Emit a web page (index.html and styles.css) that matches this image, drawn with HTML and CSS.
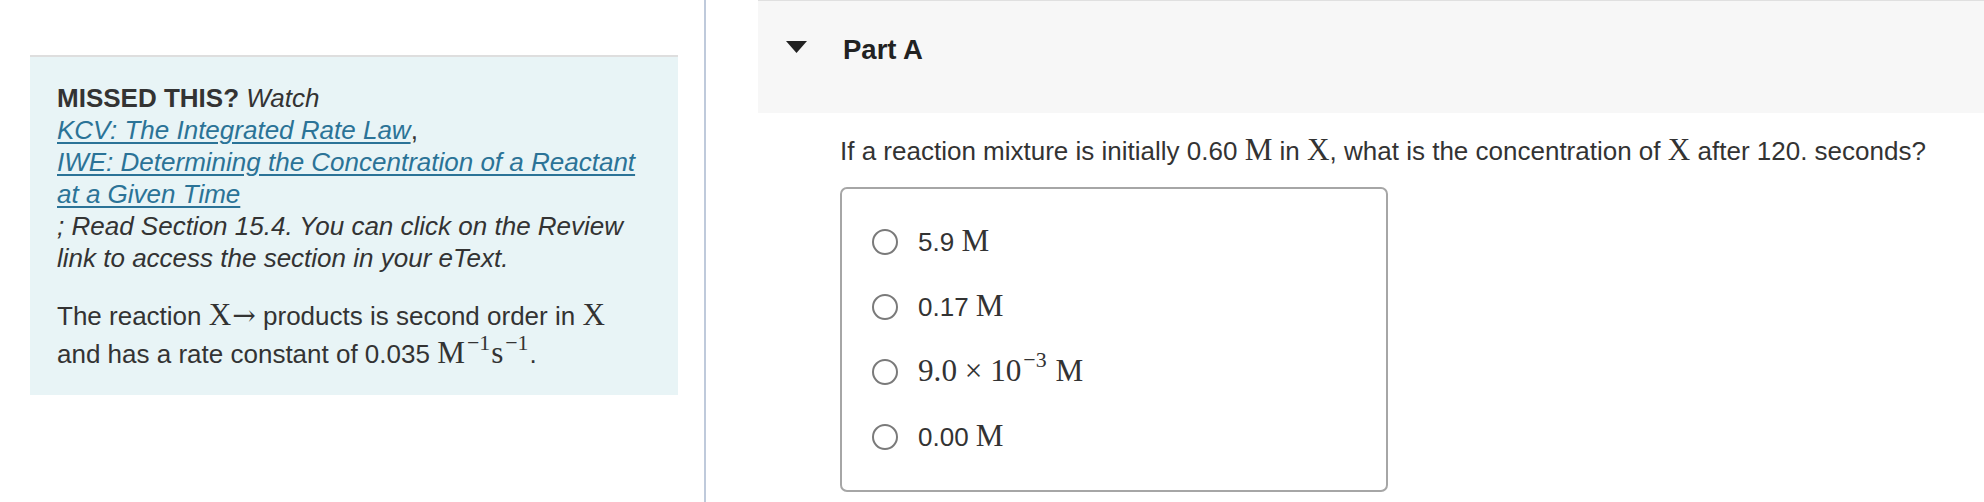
FILE: index.html
```html
<!DOCTYPE html>
<html lang="en">
<head>
<meta charset="utf-8">
<title>Part A</title>
<link rel="stylesheet" href="styles.css">
</head>
<body>
<div class="page">
  <aside class="left">
    <div class="intro">
      <p class="missed"><strong>MISSED THIS?</strong> <em>Watch</em><br>
        <a href="#">KCV: The Integrated Rate Law</a>,<br>
        <a href="#">IWE: Determining the Concentration of a Reactant at a Given Time</a><br>
        <em>; Read Section 15.4. You can click on the Review link to access the section in your eText.</em></p>
      <p class="desc">The reaction <span class="m">X<span class="arrow">→</span></span> products is second order in <span class="m">X</span> and has a rate constant of 0.035 <span class="m">M<sup>−1</sup>s<sup>−1</sup></span>.</p>
    </div>
  </aside>
  <main class="right">
    <div class="header">
      <svg class="caret" width="21" height="12" viewBox="0 0 21 12"><polygon points="0,0 21,0 10.5,12" fill="#222"/></svg>
      <h2 class="title">Part A</h2>
    </div>
    <div class="content">
      <p class="question">If a reaction mixture is initially 0.60 <span class="m">M</span> in <span class="m">X</span>, what is the concentration of <span class="m">X</span> after 120. seconds?</p>
      <div class="options">
        <label class="opt"><span class="radio"></span><span>5.9 <span class="m">M</span></span></label>
        <label class="opt"><span class="radio"></span><span>0.17 <span class="m">M</span></span></label>
        <label class="opt"><span class="radio"></span><span><span class="m">9.0 × 10<sup>−3</sup> M</span></span></label>
        <label class="opt"><span class="radio"></span><span>0.00 <span class="m">M</span></span></label>
      </div>
    </div>
  </main>
</div>
</body>
</html>
```
FILE: styles.css
```css
html, body {
  margin: 0;
  padding: 0;
  background: #fff;
}
body {
  font-family: "Liberation Sans", Arial, Helvetica, sans-serif;
  font-size: 26px;
  line-height: 32px;
  color: #333;
}
.page {
  display: flex;
  min-height: 502px;
}
.left {
  box-sizing: border-box;
  width: 706px;
  flex: 0 0 706px;
  padding: 55px 26px 0 30px;
  border-right: 2px solid #bfcadb;
}
.intro {
  background: #e8f4f6;
  border-top: 2px solid #dedede;
  padding: 25px 27px 25px 27px;
}
.intro p {
  margin: 0;
}
.missed strong {
  font-weight: bold;
}
.missed em {
  font-style: italic;
}
.missed a {
  color: #2b7397;
  font-style: italic;
  text-decoration: underline;
  text-underline-offset: 3px;
}
.desc {
  margin-top: 26px !important;
}
.m {
  font-family: "Liberation Serif", "DejaVu Serif", serif;
  font-size: 1.2em;
  line-height: 0;
}
.arrow {
  font-family: "DejaVu Serif", serif;
  font-size: 0.9em;
  margin-left: 1px;
}
.m sup {
  font-size: 0.7em;
  line-height: 1.05;
  vertical-align: 0.6em;
  margin-left: 2px;
  margin-right: 1px;
}
.opt .m sup {
  line-height: 0;
  vertical-align: 0.62em;
}
.right {
  flex: 1;
  padding-left: 52px;
}
.header {
  box-sizing: border-box;
  height: 113px;
  background: #f7f7f7;
  border-top: 1px solid #e0e0e0;
  padding: 33px 0 0 28px;
  display: flex;
  align-items: flex-start;
}
.caret {
  margin-top: 7px;
  flex: 0 0 auto;
}
.title {
  margin: 0 0 0 36px;
  font-size: 27.5px;
  line-height: 32px;
  font-weight: bold;
  color: #222;
}
.content {
  padding-left: 82px;
}
.question {
  margin: 22px 0 0;
}
.options {
  box-sizing: border-box;
  width: 548px;
  margin-top: 20px;
  border: 2px solid #a6a6a6;
  border-radius: 7px;
  padding: 33px 30px;
  display: flex;
  flex-direction: column;
  gap: 25px;
}
.opt {
  display: flex;
  align-items: center;
  gap: 20px;
  height: 40px;
}
.radio {
  box-sizing: border-box;
  width: 26px;
  height: 26px;
  flex: 0 0 26px;
  border: 2px solid #7a7a7a;
  border-radius: 50%;
  background: #fff;
}
```
